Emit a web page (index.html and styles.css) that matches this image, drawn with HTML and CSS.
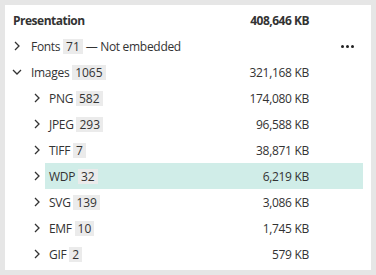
FILE: index.html
```html
<!DOCTYPE html>
<html>
<head>
<meta charset="utf-8">
<link rel="stylesheet" href="styles.css">
</head>
<body>
<div class="panel">
  <div class="row head">
    <div class="label bold">Presentation</div>
    <div class="value bold">408,646 KB</div>
    <div class="action"></div>
  </div>
  <div class="row">
    <div class="chev l0"><svg width="10" height="10" viewBox="0 0 10 10"><path d="M3 1 L7 5 L3 9" fill="none" stroke="#333" stroke-width="1.3"/></svg></div>
    <div class="label">Fonts <span class="badge">71</span> — Not embedded</div>
    <div class="value"></div>
    <div class="action"><span class="dots"><i></i><i></i><i></i></span></div>
  </div>
  <div class="row">
    <div class="chev l0"><svg width="10" height="10" viewBox="0 0 10 10"><path d="M1 3 L5 7 L9 3" fill="none" stroke="#333" stroke-width="1.3"/></svg></div>
    <div class="label">Images <span class="badge">1065</span></div>
    <div class="value">321,168 KB</div>
    <div class="action"></div>
  </div>
  <div class="row sub">
    <div class="chev l1"><svg width="10" height="10" viewBox="0 0 10 10"><path d="M3 1 L7 5 L3 9" fill="none" stroke="#333" stroke-width="1.3"/></svg></div>
    <div class="label">PNG <span class="badge">582</span></div>
    <div class="value">174,080 KB</div>
    <div class="action"></div>
  </div>
  <div class="row sub">
    <div class="chev l1"><svg width="10" height="10" viewBox="0 0 10 10"><path d="M3 1 L7 5 L3 9" fill="none" stroke="#333" stroke-width="1.3"/></svg></div>
    <div class="label">JPEG <span class="badge">293</span></div>
    <div class="value">96,588 KB</div>
    <div class="action"></div>
  </div>
  <div class="row sub">
    <div class="chev l1"><svg width="10" height="10" viewBox="0 0 10 10"><path d="M3 1 L7 5 L3 9" fill="none" stroke="#333" stroke-width="1.3"/></svg></div>
    <div class="label">TIFF <span class="badge">7</span></div>
    <div class="value">38,871 KB</div>
    <div class="action"></div>
  </div>
  <div class="row sub selected">
    <div class="chev l1"><svg width="10" height="10" viewBox="0 0 10 10"><path d="M3 1 L7 5 L3 9" fill="none" stroke="#333" stroke-width="1.3"/></svg></div>
    <div class="label">WDP <span class="badge">32</span></div>
    <div class="value">6,219 KB</div>
    <div class="action"></div>
  </div>
  <div class="row sub">
    <div class="chev l1"><svg width="10" height="10" viewBox="0 0 10 10"><path d="M3 1 L7 5 L3 9" fill="none" stroke="#333" stroke-width="1.3"/></svg></div>
    <div class="label">SVG <span class="badge">139</span></div>
    <div class="value">3,086 KB</div>
    <div class="action"></div>
  </div>
  <div class="row sub">
    <div class="chev l1"><svg width="10" height="10" viewBox="0 0 10 10"><path d="M3 1 L7 5 L3 9" fill="none" stroke="#333" stroke-width="1.3"/></svg></div>
    <div class="label">EMF <span class="badge">10</span></div>
    <div class="value">1,745 KB</div>
    <div class="action"></div>
  </div>
  <div class="row sub">
    <div class="chev l1"><svg width="10" height="10" viewBox="0 0 10 10"><path d="M3 1 L7 5 L3 9" fill="none" stroke="#333" stroke-width="1.3"/></svg></div>
    <div class="label">GIF <span class="badge">2</span></div>
    <div class="value">579 KB</div>
    <div class="action"></div>
  </div>
</div>
</body>
</html>
```

FILE: styles.css
```css
html, body {
  margin: 0;
  padding: 0;
  background: #e6e6e6;
}
body {
  padding: 5px;
  width: 366px;
  font-family: "Open Sans", "Noto Sans", sans-serif;
  font-size: 12px;
  color: #333333;
}
.panel {
  background: #ffffff;
  width: 366px;
  height: 265px;
  box-sizing: border-box;
  padding: 2px 8px 3px 8px;
}
.row {
  display: flex;
  align-items: center;
  height: 26px;
}
.chev {
  display: flex;
  align-items: center;
  height: 26px;
}
.chev.l0 {
  width: 14px;
}
.chev.l0 svg {
  margin-left: -1px;
}
.chev.l1 {
  width: 12px;
  margin-left: 20px;
}
.chev.l1 svg {
  margin-left: -1px;
}
.sub .label {
  padding-left: 4px;
}
.row:not(.head):not(.sub) .label {
  padding-left: 4px;
}
.label {
  flex: 1;
  height: 26px;
  display: flex;
  align-items: center;
  white-space: pre;
  letter-spacing: -0.3px;
}
.value {
  height: 26px;
  display: flex;
  align-items: center;
  justify-content: flex-end;
  letter-spacing: -0.3px;
}
.selected .label,
.selected .value,
.selected .action {
  background: #d0ede8;
}
.bold {
  font-weight: 700;
  letter-spacing: -0.5px;
}
.badge {
  background: #ebebeb;
  padding: 0 3px;
  line-height: 15px;
  letter-spacing: 0;
}
.action {
  width: 54px;
  height: 26px;
  display: flex;
  align-items: center;
  justify-content: flex-end;
}
.dots {
  display: flex;
  gap: 2px;
  margin-right: 9px;
}
.dots i {
  display: block;
  width: 3px;
  height: 3px;
  border-radius: 50%;
  background: #222;
}
```
